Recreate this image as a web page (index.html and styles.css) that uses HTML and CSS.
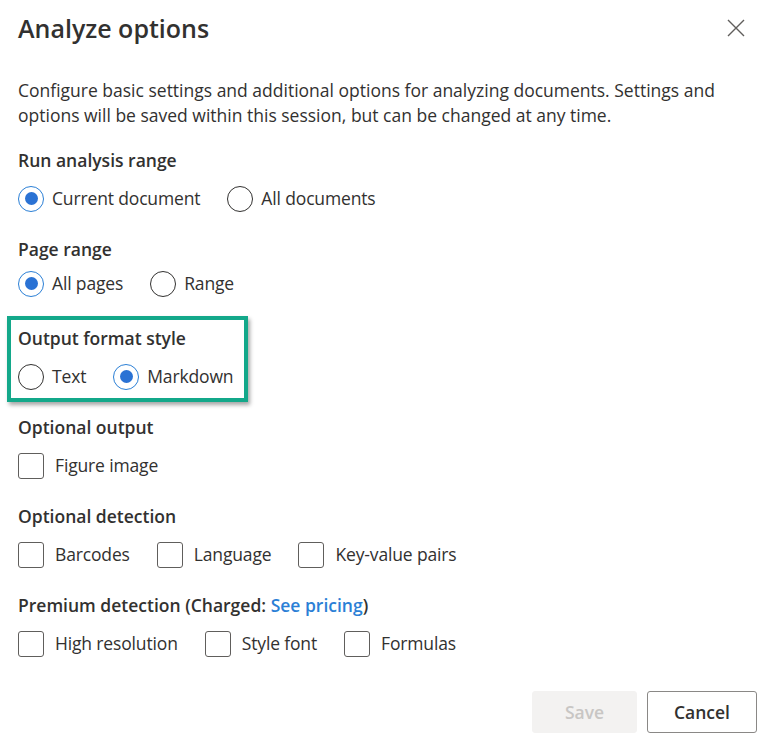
FILE: index.html
```html
<!DOCTYPE html>
<html lang="en">
<head>
<meta charset="utf-8">
<title>Analyze options</title>
<link rel="stylesheet" href="styles.css">
</head>
<body>
<div class="dialog">
  <header class="dialog-header">
    <h1 class="dialog-title">Analyze options</h1>
    <button class="close-btn" aria-label="Close">
      <svg width="18" height="18" viewBox="0 0 18 18"><path d="M1 1 L17 17 M17 1 L1 17" stroke="#605e5c" stroke-width="1.4" fill="none"/></svg>
    </button>
  </header>

  <p class="dialog-desc">Configure basic settings and additional options for analyzing documents. Settings and options will be saved within this session, but can be changed at any time.</p>

  <section class="field">
    <div class="field-label">Run analysis range</div>
    <div class="options">
      <label class="radio"><span class="radio-circle is-checked"></span><span>Current document</span></label>
      <label class="radio"><span class="radio-circle"></span><span>All documents</span></label>
    </div>
  </section>

  <section class="field field--tight">
    <div class="field-label">Page range</div>
    <div class="options">
      <label class="radio"><span class="radio-circle is-checked"></span><span>All pages</span></label>
      <label class="radio"><span class="radio-circle"></span><span>Range</span></label>
    </div>
  </section>

  <section class="field field--highlight">
    <div class="field-label">Output format style</div>
    <div class="options">
      <label class="radio"><span class="radio-circle"></span><span>Text</span></label>
      <label class="radio"><span class="radio-circle is-checked"></span><span>Markdown</span></label>
    </div>
    <div class="highlight-box"></div>
  </section>

  <section class="field">
    <div class="field-label">Optional output</div>
    <div class="options">
      <label class="check"><span class="check-box"></span><span>Figure image</span></label>
    </div>
  </section>

  <section class="field">
    <div class="field-label">Optional detection</div>
    <div class="options">
      <label class="check"><span class="check-box"></span><span>Barcodes</span></label>
      <label class="check"><span class="check-box"></span><span>Language</span></label>
      <label class="check"><span class="check-box"></span><span>Key-value pairs</span></label>
    </div>
  </section>

  <section class="field field--last">
    <div class="field-label">Premium detection (Charged: <a class="link" href="#">See pricing</a>)</div>
    <div class="options">
      <label class="check"><span class="check-box"></span><span>High resolution</span></label>
      <label class="check"><span class="check-box"></span><span>Style font</span></label>
      <label class="check"><span class="check-box"></span><span>Formulas</span></label>
    </div>
  </section>

  <footer class="dialog-footer">
    <button class="btn btn--disabled" disabled>Save</button>
    <button class="btn btn--default">Cancel</button>
  </footer>
</div>
</body>
</html>
```

FILE: styles.css
```css
html, body {
  margin: 0;
  padding: 0;
  background: #ffffff;
}

body {
  font-family: "Open Sans", "Noto Sans", "Liberation Sans", sans-serif;
  font-size: 17.5px;
  color: #323130;
}

.dialog {
  width: 768px;
  height: 744px;
  box-sizing: border-box;
  padding: 12px 11px 0 18px;
}

.dialog-header {
  display: flex;
  align-items: center;
  justify-content: space-between;
}

.dialog-title {
  margin: 0;
  font-size: 25px;
  line-height: 32px;
  font-weight: 600;
  color: #323130;
}

.close-btn {
  width: 32px;
  height: 32px;
  margin-right: 5px;
  padding: 0;
  border: 0;
  background: transparent;
  display: flex;
  align-items: center;
  justify-content: center;
}

.dialog-desc {
  margin: 33.5px 0 0;
  line-height: 25px;
  max-width: 739px;
}

.field {
  margin-top: 20px;
  margin-bottom: 0;
}

.field + .field {
  margin-top: 25px;
}

.field--tight .options {
  margin-top: 9px;
}

.field--tight + .field {
  margin-top: 29px;
}

.field-label {
  font-weight: 600;
  line-height: 25px;
}

.link {
  color: #2b7fd6;
  text-decoration: none;
}

.options {
  display: flex;
  align-items: center;
  gap: 27px;
  margin-top: 13px;
  height: 26px;
}

.radio,
.check {
  display: flex;
  align-items: center;
  line-height: 25px;
  letter-spacing: -0.15px;
}

.radio { gap: 8px; }
.check { gap: 11px; }

.radio-circle {
  width: 26px;
  height: 26px;
  box-sizing: border-box;
  border: 1.4px solid #323130;
  border-radius: 50%;
  display: flex;
  align-items: center;
  justify-content: center;
}

.radio-circle.is-checked {
  border-color: #2b7fd6;
}

.radio-circle.is-checked::after {
  content: "";
  width: 13px;
  height: 13px;
  border-radius: 50%;
  background: #2a72d4;
}

.check-box {
  width: 26px;
  height: 26px;
  box-sizing: border-box;
  border: 1.4px solid #605e5c;
  border-radius: 3px;
}

.field--highlight {
  position: relative;
}

.highlight-box {
  position: absolute;
  left: -11px;
  top: -9.5px;
  width: 241px;
  height: 86px;
  box-sizing: border-box;
  border: 4px solid #13a88a;
  box-shadow: 2px 3px 4px rgba(0, 0, 0, 0.35);
  pointer-events: none;
}

.dialog-footer {
  display: flex;
  justify-content: flex-end;
  gap: 10px;
  margin-top: 34.5px;
}

.btn {
  height: 42px;
  box-sizing: border-box;
  border-radius: 3px;
  font-family: inherit;
  font-size: 17.5px;
  font-weight: 600;
  padding: 0;
}

.btn--disabled {
  width: 105px;
  border: 1px solid #f3f2f1;
  background: #f3f2f1;
  color: #c8c6c4;
}

.btn--default {
  width: 110px;
  border: 1px solid #8a8886;
  background: #ffffff;
  color: #323130;
}
```
